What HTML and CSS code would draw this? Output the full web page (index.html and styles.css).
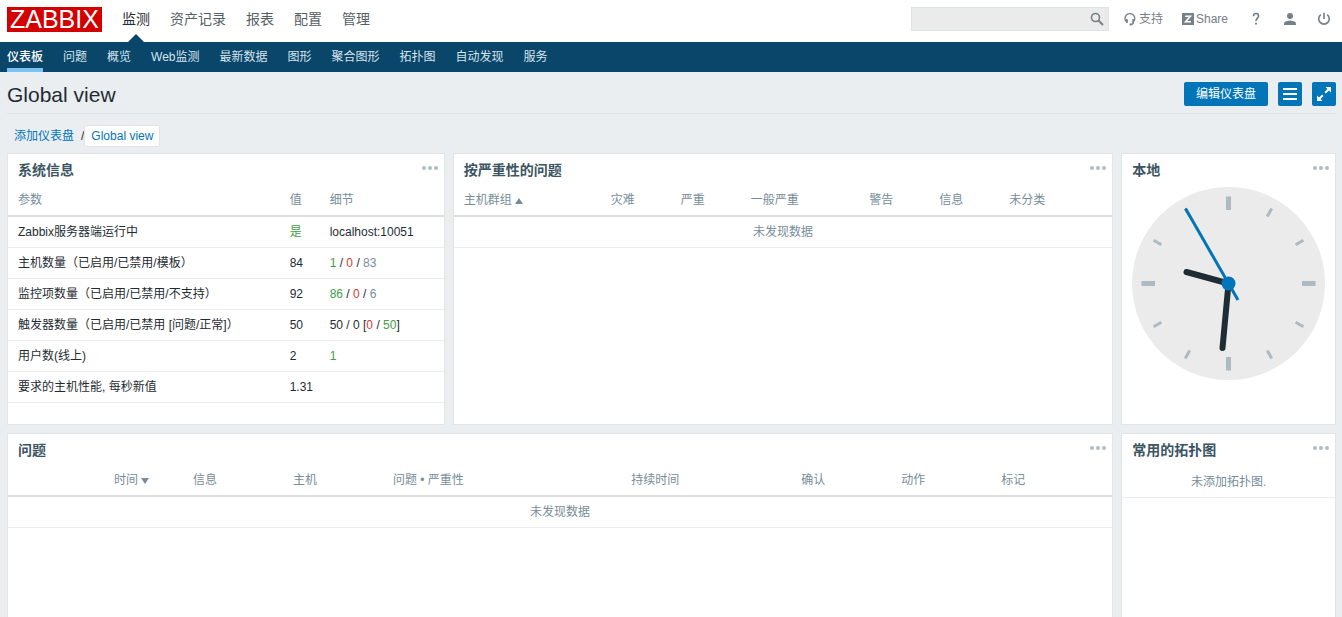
FILE: index.html
```html
<!DOCTYPE html>
<html lang="zh-CN">
<head>
<meta charset="utf-8">
<title>Global view</title>
<link rel="stylesheet" href="styles.css">
</head>
<body>
<header class="top">
  <a class="logo" href="#">ZABBIX</a>
  <nav class="main-nav">
    <a class="active" href="#">监测</a>
    <a href="#">资产记录</a>
    <a href="#">报表</a>
    <a href="#">配置</a>
    <a href="#">管理</a>
  </nav>
  <form class="search">
    <input type="text" aria-label="搜索">
    <button type="button" aria-label="搜索">
      <svg width="14" height="14" viewBox="0 0 14 14"><circle cx="5.5" cy="5.5" r="4" fill="none" stroke="#768088" stroke-width="1.6"/><path d="M8.500 8.500L13 13" stroke="#768088" stroke-width="2"/></svg>
    </button>
  </form>
  <a class="tool support" href="#"><svg width="12" height="13" viewBox="0 0 12 13"><path d="M2.300 8.500Q.9 7.500 1 5.500A4.700 4.700 0 0 1 10.800 5.500Q10.900 7.500 9.600 8.500Q9.500 11.500 6.500 11.500" fill="none" stroke="#768088" stroke-width="1.300"/><rect x="2" y="6" width="1.800" height="4" rx=".6" fill="#768088"/><rect x="8.300" y="6" width="1.800" height="4" rx=".6" fill="#768088"/><rect x="5.600" y="10.600" width="2" height="1.800" rx=".6" fill="#768088"/></svg>支持</a>
  <a class="tool share" href="#"><svg width="12" height="12" viewBox="0 0 12 12"><rect width="12" height="12" fill="#768088"/><path d="M3.200 3.200H8.400L3.600 8.800H9" fill="none" stroke="#fff" stroke-width="1.600"/></svg>Share</a>
  <a class="tool icon help" href="#" aria-label="帮助"><svg width="14" height="14" viewBox="0 0 14 14"><path d="M4.400 4.200C4.400 2.400 5.500 1.500 7 1.500S9.600 2.400 9.600 4C9.600 6 7 6.200 7 9" fill="none" stroke="#768088" stroke-width="1.700"/><rect x="6.100" y="10.600" width="1.800" height="1.900" fill="#768088"/></svg></a>
  <a class="tool icon" href="#" aria-label="用户"><svg width="14" height="14" viewBox="0 0 14 14"><circle cx="7" cy="4" r="3" fill="#768088"/><path d="M1 13V11.500Q1 9 7 8.500Q13 9 13 11.500V13Z" fill="#768088"/></svg></a>
  <a class="tool icon" href="#" aria-label="退出"><svg width="14" height="14" viewBox="0 0 14 14"><path d="M3.800 2.600A5.300 5.300 0 1 0 10.200 2.600M7 .8V7" fill="none" stroke="#768088" stroke-width="1.600"/></svg></a>
</header>

<nav class="sub-nav">
  <a class="active" href="#">仪表板</a>
  <a href="#">问题</a>
  <a href="#">概览</a>
  <a href="#">Web监测</a>
  <a href="#">最新数据</a>
  <a href="#">图形</a>
  <a href="#">聚合图形</a>
  <a href="#">拓扑图</a>
  <a href="#">自动发现</a>
  <a href="#">服务</a>
</nav>

<main class="page">
  <div class="title-row">
    <h1>Global view</h1>
    <button type="button" class="btn">编辑仪表盘</button>
    <button type="button" class="btn square" aria-label="菜单"><svg width="14" height="12" viewBox="0 0 14 12"><path d="M0 1H14M0 6H14M0 11H14" stroke="#fff" stroke-width="2"/></svg></button>
    <button type="button" class="btn square" aria-label="全屏"><svg width="16" height="16" viewBox="0 0 16 16"><path d="M9.500 1H15V6.500ZM1 9.500V15H6.500Z" fill="#fff"/><path d="M9.200 6.800L13 3M6.800 9.200L3 13" stroke="#fff" stroke-width="2"/></svg></button>
  </div>

  <div class="crumbs">
    <a href="#">添加仪表盘</a><span class="slash">/</span><a class="current" href="#">Global view</a>
  </div>

  <div class="dashboard">
    <section class="widget span-4">
      <div class="widget-head"><h4>系统信息</h4><button type="button" class="dots" aria-label="更多"><i></i><i></i><i></i></button></div>
      <table class="sysinfo">
        <thead><tr><th>参数</th><th class="value">值</th><th class="details">细节</th></tr></thead>
        <tbody>
          <tr><td>Zabbix服务器端运行中</td><td class="green">是</td><td>localhost:10051</td></tr>
          <tr><td>主机数量（已启用/已禁用/模板）</td><td>84</td><td><span class="green">1</span> / <span class="red">0</span> / <span class="grey">83</span></td></tr>
          <tr><td>监控项数量（已启用/已禁用/不支持）</td><td>92</td><td><span class="green">86</span> / <span class="red">0</span> / <span class="grey">6</span></td></tr>
          <tr><td>触发器数量（已启用/已禁用 [问题/正常]）</td><td>50</td><td>50 / 0 [<span class="red">0</span> / <span class="green">50</span>]</td></tr>
          <tr><td>用户数(线上)</td><td>2</td><td class="green">1</td></tr>
          <tr><td>要求的主机性能, 每秒新值</td><td>1.31</td><td></td></tr>
        </tbody>
      </table>
    </section>

    <section class="widget span-6">
      <div class="widget-head"><h4>按严重性的问题</h4><button type="button" class="dots" aria-label="更多"><i></i><i></i><i></i></button></div>
      <table class="severity">
        <thead><tr><th>主机群组<span class="arrow up"></span></th><th>灾难</th><th>严重</th><th class="wide">一般严重</th><th>警告</th><th>信息</th><th class="last">未分类</th></tr></thead>
        <tbody><tr><td class="empty" colspan="7">未发现数据</td></tr></tbody>
      </table>
    </section>

    <section class="widget span-2">
      <div class="widget-head"><h4>本地</h4><button type="button" class="dots" aria-label="更多"><i></i><i></i><i></i></button></div>
      <svg class="clock" viewBox="-96.500 -96.500 193 193">
        <circle r="96.500" fill="#ebebeb"/>
        <path d="M0-87V-73.500M0 73.500V87M-87 0H-73.500M73.500 0H87" stroke="#acbbc2" stroke-width="5"/>
        <g stroke="#acbbc2" stroke-width="3">
          <path d="M0-86.500V-77.500M0 77.500V86.500" transform="rotate(30)"/>
          <path d="M0-86.500V-77.500M0 77.500V86.500" transform="rotate(60)"/>
          <path d="M0-86.500V-77.500M0 77.500V86.500" transform="rotate(120)"/>
          <path d="M0-86.500V-77.500M0 77.500V86.500" transform="rotate(150)"/>
        </g>
        <path d="M0 0L-42-11.500M0 0L-6 64.500" stroke="#1f2c33" stroke-width="6" stroke-linecap="round"/>
        <path d="M-43-75L9.500 16.500" stroke="#0275b8" stroke-width="3"/>
        <circle r="7" fill="#0275b8"/>
      </svg>
    </section>

    <section class="widget span-10 open">
      <div class="widget-head"><h4>问题</h4><button type="button" class="dots" aria-label="更多"><i></i><i></i><i></i></button></div>
      <table class="problems">
        <thead><tr><th class="time">时间<span class="arrow down"></span></th><th class="line"></th><th>信息</th><th>主机</th><th class="name">问题 • 严重性</th><th class="duration">持续时间</th><th>确认</th><th>动作</th><th class="tags">标记</th></tr></thead>
        <tbody><tr><td class="empty" colspan="9">未发现数据</td></tr></tbody>
      </table>
    </section>

    <section class="widget span-2 open">
      <div class="widget-head"><h4>常用的拓扑图</h4><button type="button" class="dots" aria-label="更多"><i></i><i></i><i></i></button></div>
      <p class="no-maps">未添加拓扑图.</p>
    </section>
  </div>
</main>
</body>
</html>
```

FILE: styles.css
```css
* { box-sizing: border-box; }

body {
  display: flex;
  flex-direction: column;
  min-height: 100vh;
  margin: 0;
  background: #ebeef0;
  color: #1f2c33;
  font: 12px/18px "Liberation Sans", "Noto Sans CJK SC", sans-serif;
}

a { color: inherit; text-decoration: none; }
button { font: inherit; cursor: pointer; }
svg { flex: none; display: block; }

/* Header */
.top {
  display: flex;
  align-items: center;
  height: 42px;
  padding: 0 11px 4px 7px;
  background: #fff;
}
.logo {
  padding: 0 3px;
  background: #d40000;
  color: #fff;
  font-size: 25px;
  line-height: 25px;
}
.main-nav {
  display: flex;
  gap: 20px;
  align-self: stretch;
  margin: 0 auto 0 20px;
  color: #555f66;
  font-size: 14px;
  line-height: 38px;
}
.main-nav .active { position: relative; color: #1f2c33; }
.main-nav .active::after {
  content: "";
  position: absolute;
  bottom: -4px;
  left: 50%;
  margin-left: -8px;
  border: 8px solid transparent;
  border-top: 0;
  border-bottom-color: #0a466a;
}
.search {
  display: flex;
  align-items: center;
  width: 198px;
  height: 24px;
  border: 1px solid #dfe4e7;
  background: #ebebeb;
}
.search input {
  flex: 1;
  min-width: 0;
  height: 22px;
  padding: 0 5px;
  border: 0;
  background: none;
  font: inherit;
}
.search button { padding: 0 4px; border: 0; background: none; }
.tool { display: flex; align-items: center; color: #768088; }
.support { gap: 3px; margin-left: 15px; }
.share { gap: 2px; margin-left: 19px; }
.icon { margin-left: 20px; }
.help { margin-left: 21px; }

.sub-nav {
  display: flex;
  gap: 20px;
  height: 30px;
  padding: 0 7px;
  background: #0a466a;
  color: #d5e3ec;
  line-height: 30px;
}
.sub-nav .active { box-shadow: inset 0 -4px #7cc2f5; color: #fff; font-weight: 500; }

/* Page */
.page {
  display: flex;
  flex: 1;
  flex-direction: column;
  padding: 0 6px 0 7px;
}
.title-row {
  display: flex;
  align-items: center;
  gap: 10px;
  padding: 10px 0 7px;
  border-bottom: 1px solid #dfe4e7;
}
h1 {
  flex: 1;
  margin: 0;
  padding-top: 2px;
  font-size: 21px;
  font-weight: 400;
  line-height: 22px;
}
.btn {
  display: flex;
  align-items: center;
  justify-content: center;
  height: 24px;
  padding: 0 12px;
  border: 0;
  border-radius: 2px;
  background: #0275b8;
  color: #fff;
}
.square { width: 24px; padding: 0; }
.crumbs {
  display: flex;
  align-items: center;
  margin: 11px 0 6px;
  padding-left: 7px;
  color: #0275b8;
}
.slash { margin-left: 7px; color: #1f2c33; }
.current {
  padding: 1px 6px;
  border: 1px solid #dfe4e7;
  border-radius: 2px;
  background: #fff;
}

.dashboard {
  display: grid;
  flex: 1;
  grid-template-columns: repeat(12, 1fr);
  grid-template-rows: minmax(272px, auto) 1fr;
  gap: 8px;
}
.widget { min-width: 0; border: 1px solid #dfe4e7; background: #fff; }
.open { border-bottom: 0; }
.span-2 { grid-column: span 2; }
.span-4 { grid-column: span 4; }
.span-6 { grid-column: span 6; }
.span-10 { grid-column: span 10; }

.widget-head {
  display: flex;
  align-items: center;
  justify-content: space-between;
  height: 31px;
  padding: 0 6px 0 10px;
}
h4 { margin: 0; color: #3c5563; font-size: 14px; font-weight: 700; }
.dots {
  display: flex;
  gap: 2px;
  padding: 0 0 4px;
  border: 0;
  background: none;
}
.dots i { width: 4px; height: 4px; border-radius: 2px; background: #b0bcc4; }

/* Tables */
table { width: 100%; border-collapse: collapse; table-layout: fixed; }
th {
  height: 31px;
  padding: 0 5px;
  border-bottom: 2px solid #dcdfe1;
  color: #768d99;
  font-weight: 400;
  text-align: left;
  white-space: nowrap;
}
td { height: 31px; padding: 0 5px; border-bottom: 1px solid #ebeef0; }
th:first-child, td:first-child { padding-left: 10px; }
td.empty { padding: 0; color: #768d99; text-align: center; }
.sysinfo .value { width: 40px; }
.sysinfo .details { width: 119px; }
.severity th:nth-child(1) { width: 152px; }
.severity th { width: 70px; }
.severity .wide { width: 18%; }
.severity .last { width: auto; }
.problems th { width: 100px; }
.problems .time { width: 146px; text-align: right; }
.problems .line { width: 34px; }
.problems .name { width: auto; }
.problems .duration { width: 170px; }
.problems .tags { width: 116px; }
.arrow {
  display: inline-block;
  margin-left: 3px;
  border: 4px solid transparent;
}
.up { border-top: 0; border-bottom: 6px solid #768d99; }
.down { border-bottom: 0; border-top: 6px solid #768d99; }

.green { color: #429e47; }
.red { color: #e33734; }
.grey { color: #768d99; }

.clock { width: 92%; max-width: 193px; margin: 2px auto 0; }
.no-maps {
  margin: 0;
  padding: 8px 0 6px;
  border-bottom: 1px solid #ebeef0;
  color: #768d99;
  text-align: center;
}
```
